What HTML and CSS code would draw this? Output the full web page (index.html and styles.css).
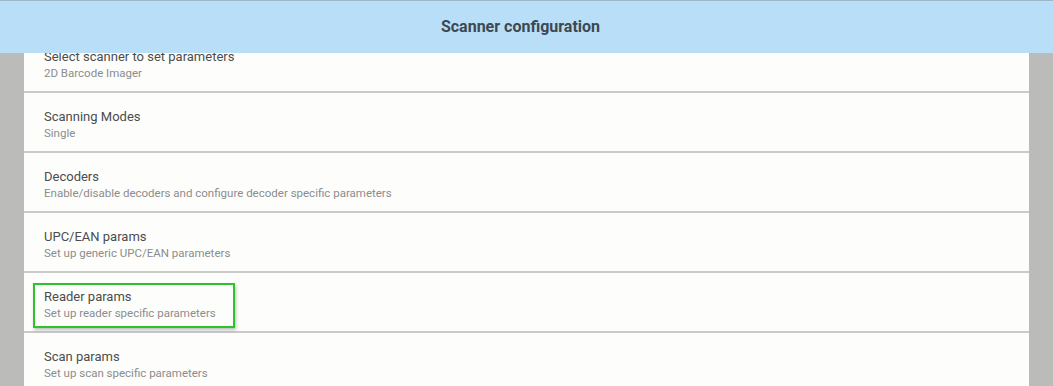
FILE: index.html
```html
<!DOCTYPE html>
<html>
<head>
<meta charset="utf-8">
<link rel="stylesheet" href="styles.css">
</head>
<body>
<div class="screen">
  <header class="appbar">Scanner configuration</header>
  <ul class="list">
    <li class="item">
      <div class="title">Select scanner to set parameters</div>
      <div class="sub">2D Barcode Imager</div>
    </li>
    <li class="item">
      <div class="title">Scanning Modes</div>
      <div class="sub">Single</div>
    </li>
    <li class="item">
      <div class="title">Decoders</div>
      <div class="sub">Enable/disable decoders and configure decoder specific parameters</div>
    </li>
    <li class="item">
      <div class="title">UPC/EAN params</div>
      <div class="sub">Set up generic UPC/EAN parameters</div>
    </li>
    <li class="item">
      <div class="focus">
        <div class="title">Reader params</div>
        <div class="sub">Set up reader specific parameters</div>
      </div>
    </li>
    <li class="item">
      <div class="title">Scan params</div>
      <div class="sub">Set up scan specific parameters</div>
    </li>
  </ul>
</div>
</body>
</html>
```
FILE: styles.css
```css
* { box-sizing: border-box; }
html, body {
  margin: 0;
  padding: 0;
  height: 100%;
  overflow: hidden;
}
body {
  background: #bbbcba;
  font-family: Roboto, "Liberation Sans", sans-serif;
}
.screen {
  position: relative;
  height: 386px;
  overflow: hidden;
}
.appbar {
  position: absolute;
  top: 0;
  left: 0;
  right: 0;
  height: 53px;
  background: #b9def7;
  border-top: 1px solid #9cb6ca;
  display: flex;
  align-items: center;
  justify-content: center;
  font-size: 16px;
  font-weight: 700;
  color: #3d4951;
  z-index: 2;
  padding: 0 12px 1px 0;
}
.list {
  list-style: none;
  margin: 33px 24px 0 24px;
  padding: 0;
  background: #fdfefc;
}
.item {
  height: 60px;
  border-bottom: 2px solid #cacbc9;
  padding: 16px 0 0 20px;
}
.title {
  font-size: 13px;
  line-height: 16px;
  color: #4c4c4c;
}
.sub {
  font-size: 11.5px;
  line-height: 16px;
  color: #8c8c8c;
}
.focus {
  display: inline-block;
  margin: -6px 0 0 -11px;
  padding: 4px 17px 5px 9px;
  border: 2px solid #2bc42b;
  box-shadow: 1px 2px 3px rgba(0,0,0,0.25);
}
```
